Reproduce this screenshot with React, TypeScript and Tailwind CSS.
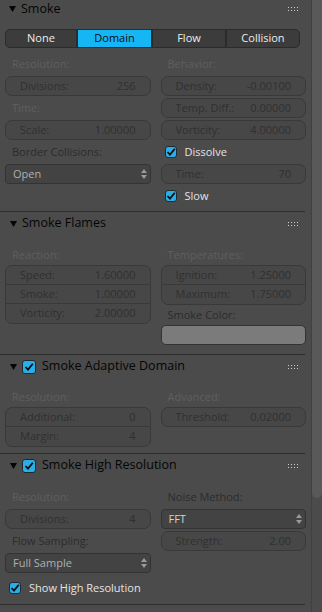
import React from 'react'

const font = "font-['Open_Sans','Noto_Sans',sans-serif]"

function Tri() {
  return (
    <svg width="7" height="6" viewBox="0 0 7 6" className="shrink-0">
      <polygon points="0,0 7,0 3.5,6" fill="#050505" />
    </svg>
  )
}

function Grip() {
  const dots = []
  for (let r = 0; r < 2; r++) {
    for (let c = 0; c < 4; c++) {
      dots.push(<rect key={r + '-' + c} x={c * 3} y={r * 3} width="1" height="1" fill="#cfcfcf" />)
    }
  }
  return (
    <svg width="10" height="4" viewBox="0 0 10 4" className="ml-auto shrink-0">
      {dots}
    </svg>
  )
}

function Check({ big = false }: { big?: boolean }) {
  return (
    <span
      className={`flex shrink-0 items-center justify-center rounded-[3px] border border-[#1e2a30] bg-[#2aaee8] ${
        big ? 'h-[14px] w-[14px]' : 'h-[12px] w-[12px]'
      }`}
    >
      <svg width="10" height="10" viewBox="0 0 10 10">
        <path d="M1.5 5 L4 7.6 L8.8 1.8" fill="none" stroke="#0d0d0d" strokeWidth="1.8" />
      </svg>
    </span>
  )
}

function Header({ title, check = false }: { title: string; check?: boolean }) {
  return (
    <div className="flex h-[23px] items-center pl-[10px] pr-[13px]">
      <Tri />
      {check && (
        <span className="ml-[5px]">
          <Check big />
        </span>
      )}
      <span className={`${check ? 'ml-[6px]' : 'ml-[5px]'} text-[12.5px] text-[#050505]`}>{title}</span>
      <Grip />
    </div>
  )
}

function Label({ text, faint = false }: { text: string; faint?: boolean }) {
  return (
    <div className={`flex h-[20px] items-center pl-[7px] text-[11px] ${faint ? 'text-[#5f5f5f]' : 'text-[#2c2c2c]'}`}>
      {text}
    </div>
  )
}

function Num({ label, value }: { label: string; value: string }) {
  return (
    <div className="flex h-[20px] items-center justify-between rounded-[7px] border border-[#393939] bg-[#474747] px-[14px] text-[11px] text-[#303030]">
      <span>{label}</span>
      <span>{value}</span>
    </div>
  )
}

function Stack({ rows }: { rows: [string, string][] }) {
  return (
    <div className="flex flex-col divide-y divide-[#393939] overflow-hidden rounded-[7px] border border-[#393939] bg-[#474747]">
      {rows.map(([l, v]) => (
        <div key={l} className="flex h-[19px] items-center justify-between px-[14px] text-[11px] text-[#303030]">
          <span>{l}</span>
          <span>{v}</span>
        </div>
      ))}
    </div>
  )
}

function Menu({ text, light = false }: { text: string; light?: boolean }) {
  return (
    <div className="flex h-[20px] items-center justify-between rounded-[4px] border border-[#333333] bg-[#434343] pl-[7px] pr-[3px] text-[11px]">
      <span className={light ? 'text-[#d2d2d2]' : 'text-[#b0b0b0]'}>{text}</span>
      <svg width="6" height="12" viewBox="0 0 6 12">
        <polygon points="3,1 6,5 0,5" fill="#9a9a9a" />
        <polygon points="0,7 6,7 3,11" fill="#9a9a9a" />
      </svg>
    </div>
  )
}

function Toggle({ text, className = '' }: { text: string; className?: string }) {
  return (
    <div className={`flex h-[20px] items-center pl-[4px] text-[11px] text-[#e4e4e4] ${className}`}>
      <Check />
      <span className="ml-[8px]">{text}</span>
    </div>
  )
}

function Sep() {
  return <div className="h-px w-[305px] bg-[#2e2e2e]" />
}

const tabs = [
  { name: 'None', w: 'w-[72px]', on: false, round: 'rounded-l-[5px]' },
  { name: 'Domain', w: 'w-[75px]', on: true, round: '' },
  { name: 'Flow', w: 'w-[74px]', on: false, round: '' },
  { name: 'Collision', w: 'w-[74px]', on: false, round: 'rounded-r-[5px]' },
]

export default function App() {
  return (
    <div className={`flex h-[612px] w-[322px] overflow-hidden bg-[#4b4b4b] ${font}`}>
      <div className="flex w-[311px] flex-col">
        {/* Smoke */}
        <div className="flex h-[18px] items-center pl-[9px] pr-[13px]">
          <Tri />
          <span className="ml-[5px] text-[12.5px] text-[#050505]">Smoke</span>
          <Grip />
        </div>
        <div className="mt-[11px] flex px-[5px]">
          {tabs.map(t => (
            <div
              key={t.name}
              className={`flex h-[19px] items-center justify-center border border-[#2b2b2b] text-[11px] ${t.w} ${t.round} ${
                t.on ? 'bg-[#16b6f5] text-[#0a0a0a]' : 'bg-[#3c3c3c] text-[#ececec]'
              }`}
            >
              {t.name}
            </div>
          ))}
        </div>
        <div className="mt-[6px] grid grid-cols-2 gap-x-[10px] px-[5px] pb-[5px]">
          <div className="flex flex-col gap-[2px]">
            <Label text="Resolution:" faint />
            <Num label="Divisions:" value="256" />
            <Label text="Time:" faint />
            <Num label="Scale:" value="1.00000" />
            <Label text="Border Collisions:" />
            <Menu text="Open" />
          </div>
          <div className="flex flex-col gap-[2px]">
            <Label text="Behavior:" faint />
            <Num label="Density:" value="-0.00100" />
            <Num label="Temp. Diff.:" value="0.00000" />
            <Num label="Vorticity:" value="4.00000" />
            <Toggle text="Dissolve" />
            <Num label="Time:" value="70" />
            <Toggle text="Slow" />
          </div>
        </div>
        <Sep />

        {/* Smoke Flames */}
        <Header title="Smoke Flames" />
        <div className="mt-[10px] grid grid-cols-2 gap-x-[10px] px-[5px] pb-[9px]">
          <div className="flex flex-col">
            <Label text="Reaction:" faint />
            <Stack
              rows={[
                ['Speed:', '1.60000'],
                ['Smoke:', '1.00000'],
                ['Vorticity:', '2.00000'],
              ]}
            />
          </div>
          <div className="flex flex-col">
            <Label text="Temperatures:" faint />
            <Stack
              rows={[
                ['Ignition:', '1.25000'],
                ['Maximum:', '1.75000'],
              ]}
            />
            <Label text="Smoke Color:" />
            <div className="h-[20px] rounded-[5px] border border-[#333333] bg-[#7b7b7b]" />
          </div>
        </div>
        <Sep />

        {/* Smoke Adaptive Domain */}
        <Header title="Smoke Adaptive Domain" check />
        <div className="mt-[9px] grid grid-cols-2 gap-x-[10px] px-[5px] pb-[6px]">
          <div className="flex flex-col">
            <Label text="Resolution:" faint />
            <Stack
              rows={[
                ['Additional:', '0'],
                ['Margin:', '4'],
              ]}
            />
          </div>
          <div className="flex flex-col">
            <Label text="Advanced:" faint />
            <Num label="Threshold:" value="0.02000" />
          </div>
        </div>
        <Sep />

        {/* Smoke High Resolution */}
        <Header title="Smoke High Resolution" check />
        <div className="mt-[10px] grid grid-cols-2 gap-x-[10px] px-[5px]">
          <div className="flex flex-col gap-[2px]">
            <Label text="Resolution:" faint />
            <Num label="Divisions:" value="4" />
            <Label text="Flow Sampling:" />
            <Menu text="Full Sample" />
          </div>
          <div className="flex flex-col gap-[2px]">
            <Label text="Noise Method:" />
            <Menu text="FFT" light />
            <Num label="Strength:" value="2.00" />
          </div>
        </div>
        <div className="mt-[5px] px-[5px] pb-[6px]">
          <Toggle text="Show High Resolution" className="pl-[3px]" />
        </div>
        <Sep />
      </div>
      <div className="flex w-[11px] flex-col border-l border-[#404040]">
        <div className="h-[498px] rounded-b-[5px] bg-[#595959]" />
      </div>
    </div>
  )
}
